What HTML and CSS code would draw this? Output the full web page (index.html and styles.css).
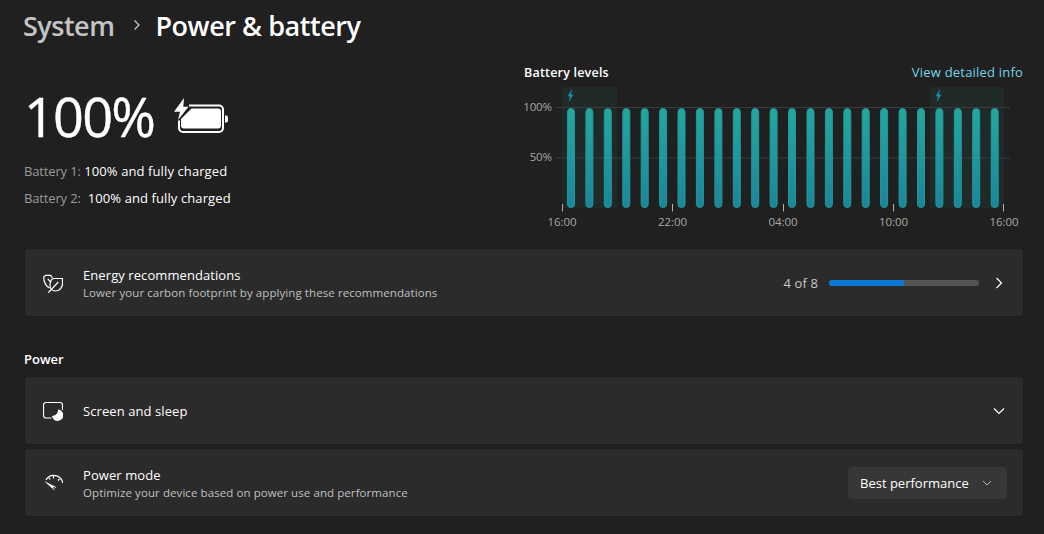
FILE: index.html
```html
<!DOCTYPE html>
<html lang="en">
<head>
    <meta charset="UTF-8">
    <title>Power &amp; battery</title>
    <link rel="stylesheet" href="styles.css">
</head>
<body>
<div class="page">
    <header class="title-bar">
        <span class="crumb">System</span>
        <svg class="crumb-sep" width="10" height="12" viewBox="0 0 10 12"><path d="M2.500 1.500 7 6l-4.500 4.500" fill="none" stroke="#c8c8c8" stroke-width="1.300"/></svg>
        <h1 class="current">Power &amp; battery</h1>
    </header>

    <section class="hero">
        <div class="summary">
            <div class="big-level">
                <span class="big-num">100%</span>
                <svg class="big-battery" width="56" height="36" viewBox="0 0 56 36">
                    <path d="M15 7.500H45a4 4 0 0 1 4 4V30a4 4 0 0 1-4 4H9a4 4 0 0 1-4-4V22.500" fill="none" stroke="#fff" stroke-width="2"/>
                    <path d="M17.500 10.500H44a3 3 0 0 1 3 3V27.500a3 3 0 0 1-3 3H10a3 3 0 0 1-3-3V21Z" fill="#fff"/>
                    <path d="M51 17.500h1a2 2 0 0 1 2 2v3a2 2 0 0 1-2 2h-1Z" fill="#fff"/>
                    <path d="M10 0 0 13.700H6L4 22 14.500 8.700H9.300Z" fill="#fff"/>
                </svg>
            </div>
            <p class="bat-line"><span class="bat-name">Battery 1:</span> 100% and fully charged</p>
            <p class="bat-line"><span class="bat-name">Battery 2:</span> &nbsp;100% and fully charged</p>
        </div>
        <div class="levels">
            <div class="levels-head">
                <span class="levels-title">Battery levels</span>
                <a class="levels-link">View detailed info</a>
            </div>
            <svg class="chart" width="504" height="155" viewBox="0 0 504 155">
                <defs>
                    <linearGradient id="barFill" x1="0" y1="0" x2="0" y2="1">
                        <stop offset="0" stop-color="#25aea4"/>
                        <stop offset="1" stop-color="#1c8aa2"/>
                    </linearGradient>
                </defs>
                <rect class="charge" x="42" y="0" width="55" height="121"/>
                <rect class="charge" x="410" y="0" width="74" height="121"/>
                <path class="bolt" d="M52 2 47.500 9.500H50L48.500 15.500 53.500 7.500H51Z"/>
                <path class="bolt" d="M420 2 415.500 9.500H418L416.500 15.500 421.500 7.500H419Z"/>
                <line class="grid" x1="36" y1="20.500" x2="490" y2="20.500"/>
                <line class="grid" x1="36" y1="71" x2="490" y2="71"/>
                <g class="bars">
                    <rect x="47.500" y="21.500" width="7" height="99" rx="3.500"/>
                    <rect x="65.900" y="21.500" width="7" height="99" rx="3.500"/>
                    <rect x="84.300" y="21.500" width="7" height="99" rx="3.500"/>
                    <rect x="102.800" y="21.500" width="7" height="99" rx="3.500"/>
                    <rect x="121.200" y="21.500" width="7" height="99" rx="3.500"/>
                    <rect x="139.600" y="21.500" width="7" height="99" rx="3.500"/>
                    <rect x="158" y="21.500" width="7" height="99" rx="3.500"/>
                    <rect x="176.400" y="21.500" width="7" height="99" rx="3.500"/>
                    <rect x="194.900" y="21.500" width="7" height="99" rx="3.500"/>
                    <rect x="213.300" y="21.500" width="7" height="99" rx="3.500"/>
                    <rect x="231.700" y="21.500" width="7" height="99" rx="3.500"/>
                    <rect x="250.100" y="21.500" width="7" height="99" rx="3.500"/>
                    <rect x="268.500" y="21.500" width="7" height="99" rx="3.500"/>
                    <rect x="287" y="21.500" width="7" height="99" rx="3.500"/>
                    <rect x="305.400" y="21.500" width="7" height="99" rx="3.500"/>
                    <rect x="323.800" y="21.500" width="7" height="99" rx="3.500"/>
                    <rect x="342.200" y="21.500" width="7" height="99" rx="3.500"/>
                    <rect x="360.600" y="21.500" width="7" height="99" rx="3.500"/>
                    <rect x="379.100" y="21.500" width="7" height="99" rx="3.500"/>
                    <rect x="397.500" y="21.500" width="7" height="99" rx="3.500"/>
                    <rect x="415.900" y="21.500" width="7" height="99" rx="3.500"/>
                    <rect x="434.300" y="21.500" width="7" height="99" rx="3.500"/>
                    <rect x="452.700" y="21.500" width="7" height="99" rx="3.500"/>
                    <rect x="471.200" y="21.500" width="7" height="99" rx="3.500"/>
                </g>
                <g class="ticks">
                    <line x1="42.500" y1="117" x2="42.500" y2="124.500"/>
                    <line x1="152.500" y1="117" x2="152.500" y2="124.500"/>
                    <line x1="263.500" y1="117" x2="263.500" y2="124.500"/>
                    <line x1="373.500" y1="117" x2="373.500" y2="124.500"/>
                    <line x1="483.500" y1="117" x2="483.500" y2="124.500"/>
                </g>
                <text class="lbl" x="32" y="23.500" text-anchor="end">100%</text>
                <text class="lbl" x="32" y="74" text-anchor="end">50%</text>
                <text class="lbl" x="42" y="139" text-anchor="middle">16:00</text>
                <text class="lbl" x="152.500" y="139" text-anchor="middle">22:00</text>
                <text class="lbl" x="263" y="139" text-anchor="middle">04:00</text>
                <text class="lbl" x="373.500" y="139" text-anchor="middle">10:00</text>
                <text class="lbl" x="484" y="139" text-anchor="middle">16:00</text>
            </svg>
        </div>
    </section>

    <div class="card">
        <svg class="card-icon" width="20" height="20" viewBox="0 0 20 20" fill="none" stroke="#fff" stroke-width="1.200">
            <path d="M9.500 5 7.500 2.300H2.500L0.700 4C0.700 8 2 12.500 6.500 15"/>
            <path d="M4.800 5.800 8 9.500"/>
            <path d="M11 5.500H19.500V11C19.500 15 16 18 12.500 18 9 18 7 15.500 7 12.500 7 9.500 8 5.500 11 5.500Z"/>
            <path d="M5.300 19.700 15.300 9"/>
        </svg>
        <div class="card-text two-line">
            <div class="card-title">Energy recommendations</div>
            <div class="card-sub">Lower your carbon footprint by applying these recommendations</div>
        </div>
        <span class="count">4 of 8</span>
        <div class="progress"><div class="progress-fill"></div></div>
        <svg class="chev" width="12" height="12" viewBox="0 0 12 12"><path d="M3.500 1 8.500 6 3.500 11" fill="none" stroke="#fff" stroke-width="1.200"/></svg>
    </div>

    <h2 class="section-title">Power</h2>

    <div class="card">
        <svg class="card-icon" width="20" height="20" viewBox="0 0 20 20">
            <path d="M8.500 17H3a2.500 2.500 0 0 1-2.500-2.500V4A2.500 2.500 0 0 1 3 1.500H17A2.500 2.500 0 0 1 19.500 4V9" fill="none" stroke="#fff" stroke-width="1.200"/>
            <path d="M15 8.500A5.700 5.700 0 1 1 9 15C12.500 15 15.300 12.500 15 8.500Z" fill="#fff"/>
        </svg>
        <div class="card-text">
            <div class="card-title">Screen and sleep</div>
        </div>
        <svg class="chev" width="12" height="12" viewBox="0 0 12 12"><path d="M1 3.500 6 8.500 11 3.500" fill="none" stroke="#fff" stroke-width="1.200"/></svg>
    </div>

    <div class="card card-gap">
        <svg class="card-icon" width="20" height="20" viewBox="0 0 20 20" fill="none" stroke="#fff" stroke-width="1.200">
            <path d="M3 7A9 9 0 0 1 19.700 10"/>
            <path d="M10.500 3V5.500M16.500 6 15 7.500M6 4.500 7 6.500"/>
            <path d="M1 8 13 14 11 17Z" fill="#fff" stroke="none"/>
            <circle cx="11" cy="15" r="1" fill="#2b2b2b" stroke="none"/>
        </svg>
        <div class="card-text two-line">
            <div class="card-title">Power mode</div>
            <div class="card-sub">Optimize your device based on power use and performance</div>
        </div>
        <div class="select">
            <span>Best performance</span>
            <svg width="10" height="10" viewBox="0 0 10 10"><path d="M1 3 5 7 9 3" fill="none" stroke="#b5b5b5" stroke-width="1"/></svg>
        </div>
    </div>
</div>
</body>
</html>
```

FILE: styles.css
```css
* {
    box-sizing: border-box;
}
html, body {
    margin: 0;
    height: 100%;
}
body {
    background-color: #202020;
    color: #fff;
    font-family: "Open Sans", "Noto Sans", sans-serif;
    overflow: hidden;
}
.page {
    padding: 0 20px 0 24px;
}

/* title */
.title-bar {
    display: flex;
    align-items: center;
    height: 50px;
}
.crumb {
    font-size: 27px;
    font-weight: 600;
    letter-spacing: -0.5px;
    color: #c4c4c4;
    margin-left: -1px;
}
.crumb-sep {
    margin: 0 13px 0 18px;
}
.current {
    margin: 0;
    font-size: 27px;
    font-weight: 600;
    letter-spacing: -0.45px;
}

/* top area */
.hero {
    display: flex;
    justify-content: space-between;
    height: 198px;
}
.summary {
    padding-top: 37px;
}
.big-level {
    display: flex;
    align-items: center;
    height: 58px;
    margin-bottom: 17px;
}
.big-num {
    font-size: 54px;
    letter-spacing: -1.800px;
    -webkit-text-stroke: 0.4px #fff;
}
.big-battery {
    margin-left: 20px;
}
.bat-line {
    margin: 0 0 9px;
    font-size: 13px;
    line-height: 18px;
    letter-spacing: 0.1px;
    color: #fff;
}
.bat-name {
    color: #9a9a9a;
    letter-spacing: -0.15px;
}
.levels {
    width: 504px;
    padding-top: 13px;
    display: flex;
    flex-direction: column;
}
.levels-head {
    display: flex;
    justify-content: space-between;
    align-items: center;
    height: 18px;
    padding: 0 1px 0 4px;
    margin-bottom: 6px;
}
.levels-title {
    font-size: 12.500px;
    font-weight: 600;
    letter-spacing: 0.2px;
}
.levels-link {
    font-size: 13px;
    letter-spacing: 0.2px;
    color: #76d4e8;
}
.chart {
    display: block;
}
.charge {
    fill: #202a29;
}
.bolt {
    fill: #1c8aa2;
}
.grid {
    stroke: #3b3b3b;
    stroke-width: 1;
}
.bars rect {
    fill: url(#barFill);
    stroke: #1f9a9c;
    stroke-width: 1;
    fill-opacity: 0.95;
}
.ticks line {
    stroke: #b0b0b0;
    stroke-width: 1;
}
.lbl {
    font-size: 11.500px;
    fill: #a8a8a8;
    letter-spacing: -0.1px;
}

/* cards */
.card {
    display: flex;
    align-items: center;
    height: 69px;
    padding: 0 18px;
    background-color: #2b2b2b;
    border: 1px solid #1d1d1d;
    border-radius: 5px;
}
.card-gap {
    margin-top: 3px;
}
.card-icon {
    flex: none;
    margin-right: 20px;
}
.card-text {
    flex: 1;
}
.two-line {
    padding-top: 2px;
}
.card-title {
    font-size: 13px;
    line-height: 18px;
    letter-spacing: 0.08px;
}
.card-sub {
    margin-top: 1px;
    font-size: 11.500px;
    line-height: 16px;
    letter-spacing: 0.08px;
    color: #c0c0c0;
}
.count {
    font-size: 13px;
    letter-spacing: 0.1px;
    color: #c8c8c8;
    margin-right: 11px;
}
.progress {
    width: 150px;
    height: 6px;
    border-radius: 3px;
    background-color: #545454;
    overflow: hidden;
    margin-right: 14px;
}
.progress-fill {
    width: 50%;
    height: 100%;
    background-color: #0a78d4;
}
.section-title {
    margin: 0;
    height: 59px;
    padding-top: 33px;
    font-size: 13px;
    line-height: 18px;
    font-weight: 600;
    letter-spacing: 0;
}
.select {
    display: flex;
    align-items: center;
    justify-content: space-between;
    width: 159px;
    height: 32px;
    padding: 0 15px 0 12px;
    margin-right: -2px;
    border-radius: 4px;
    background-color: #373737;
    font-size: 13px;
}
```
